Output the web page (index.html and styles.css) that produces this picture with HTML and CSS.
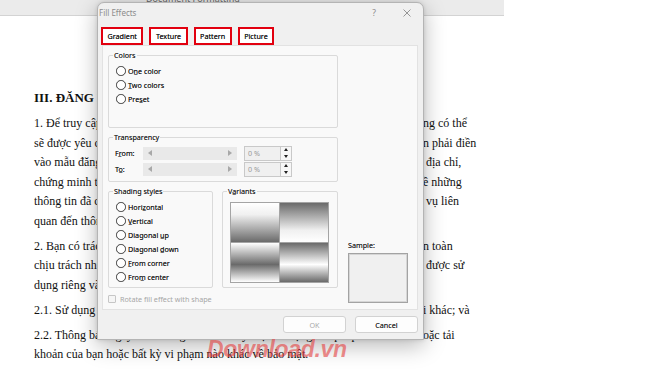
FILE: index.html
```html
<!DOCTYPE html>
<html lang="vi">
<head>
<meta charset="utf-8">
<title>Fill Effects</title>
<link rel="stylesheet" href="styles.css">
</head>
<body>
<div class="page">
  <div class="topbar"><span class="topbar-title">Document Formatting</span></div>
  <div class="doc">
    <h3 class="doc-heading">III. ĐĂNG KÝ</h3>
    <div class="para">
      <div class="line"><span class="l">1. Để truy cập</span><span class="r">ng có thể</span></div>
      <div class="line"><span class="l">sẽ được yêu cầu</span><span class="r">n phải điền</span></div>
      <div class="line"><span class="l">vào mẫu đăng ký</span><span class="r"> địa chỉ,</span></div>
      <div class="line"><span class="l">chứng minh thư</span><span class="r">ề những</span></div>
      <div class="line"><span class="l">thông tin đã cung</span><span class="r"> vụ liên</span></div>
      <div class="line"><span class="l">quan đến thông</span><span class="r"></span></div>
    </div>
    <div class="para">
      <div class="line"><span class="l">2. Bạn có trách</span><span class="r">n toàn</span></div>
      <div class="line"><span class="l">chịu trách nhiệm</span><span class="r"> được sử</span></div>
      <div class="line"><span class="l">dụng riêng và</span><span class="r"></span></div>
    </div>
    <div class="para">
      <div class="line"><span class="l">2.1. Sử dụng tài</span><span class="r">i khác; và</span></div>
    </div>
    <div class="para">
      <div class="line"><span class="l l-wide">2.2. Thông báo ngay cho chúng tôi về bất kỳ việc sử dụng trái phép</span><span class="r">oặc tải</span></div>
      <div class="line"><span class="l l-full">khoản của bạn hoặc bất kỳ vi phạm nào khác về bảo mật.</span></div>
    </div>
  </div>

  <div class="dialog">
    <div class="titlebar">
      <span class="title">Fill Effects</span>
      <span class="tb-help">?</span>
      <svg class="tb-close" width="8" height="8" viewBox="0 0 8 8"><path d="M0.5 0.5 L7.5 7.5 M7.5 0.5 L0.5 7.5" stroke="#8a8a8a" stroke-width="0.9" fill="none"/></svg>
    </div>
    <div class="tabs">
      <span class="tab">Gradient</span>
      <span class="tab">Texture</span>
      <span class="tab">Pattern</span>
      <span class="tab">Picture</span>
    </div>
    <div class="panel">
      <div class="panel-body">
        <div class="left-col">
          <div class="group colors">
            <span class="group-label">Colors</span>
            <div class="radio-row"><span class="radio"></span><span>On̲e color</span></div>
            <div class="radio-row"><span class="radio"></span><span>T̲wo colors</span></div>
            <div class="radio-row"><span class="radio"></span><span>Pres̲et</span></div>
          </div>
          <div class="group transparency">
            <span class="group-label">Transparency</span>
            <div class="trow">
              <span class="trow-label">Fr̲om:</span>
              <span class="slider"><span class="tri-left"></span><span class="tri-right"></span></span>
              <span class="num">0 %</span>
              <span class="spin"><span class="tri-up"></span><span class="tri-down"></span></span>
            </div>
            <div class="trow">
              <span class="trow-label">To̲:</span>
              <span class="slider"><span class="tri-left"></span><span class="tri-right"></span></span>
              <span class="num">0 %</span>
              <span class="spin"><span class="tri-up"></span><span class="tri-down"></span></span>
            </div>
          </div>
          <div class="group-row">
            <div class="group shading">
              <span class="group-label">Shading styles</span>
              <div class="radio-row"><span class="radio"></span><span>Horiz̲ontal</span></div>
              <div class="radio-row"><span class="radio"></span><span>V̲ertical</span></div>
              <div class="radio-row"><span class="radio"></span><span>Diagonal u̲p</span></div>
              <div class="radio-row"><span class="radio"></span><span>Diagonal d̲own</span></div>
              <div class="radio-row"><span class="radio"></span><span>F̲rom corner</span></div>
              <div class="radio-row"><span class="radio"></span><span>From̲ center</span></div>
            </div>
            <div class="group variants">
              <span class="group-label">Va̲riants</span>
              <div class="vgrid">
                <span class="cell cell-a"></span>
                <span class="cell cell-b"></span>
                <span class="cell cell-c"></span>
                <span class="cell cell-d"></span>
              </div>
            </div>
          </div>
          <div class="check-row"><span class="checkbox"></span><span>Rotate fill effect with shape</span></div>
        </div>
        <div class="right-col">
          <span class="sample-label">Sample:</span>
          <span class="sample-box"></span>
        </div>
      </div>
    </div>
    <div class="buttons">
      <span class="btn btn-disabled">OK</span>
      <span class="btn">Cancel</span>
    </div>
  </div>

  <div class="watermark">Download.vn</div>
</div>
</body>
</html>
```

FILE: styles.css
```css
html, body {
  margin: 0;
  padding: 0;
  background: #ffffff;
}

.page {
  position: relative;
  width: 650px;
  height: 374px;
  overflow: hidden;
  background: #ffffff;
}

/* ---------- document behind ---------- */
.topbar {
  width: 504px;
  height: 15px;
  background: #ebebeb;
  border-bottom: 1px solid #d3d3d3;
  overflow: hidden;
}

.topbar-title {
  display: block;
  margin-top: -6px;
  padding-left: 146px;
  font: 9px/9px "Noto Sans", sans-serif;
  color: #666;
}

.doc {
  padding: 72px 0 0 34px;
  font-family: "Liberation Serif", "Times New Roman", serif;
  font-size: 12px;
  color: #111;
}

.doc-heading {
  margin: 0 0 6.5px 0;
  font-size: 13px;
  font-weight: bold;
  line-height: 19.6px;
  white-space: nowrap;
}

.para + .para {
  margin-top: 5.2px;
}

.line {
  display: grid;
  grid-template-columns: 389px auto;
  height: 19.6px;
  line-height: 19.6px;
}

.line .l {
  white-space: nowrap;
}

.line .l-full {
  grid-column: 1 / 3;
}

.line .r {
  white-space: pre;
}

/* ---------- dialog ---------- */
.dialog {
  position: absolute;
  left: 97px;
  top: 2px;
  width: 327px;
  height: 338px;
  box-sizing: border-box;
  background: #f0f0f0;
  border: 1px solid #b4b4b4;
  border-radius: 7px 7px 0 0;
  box-shadow: 0 6px 22px rgba(0, 0, 0, 0.28), 0 0 4px rgba(0, 0, 0, 0.12);
  font-family: "Noto Sans", "Liberation Sans", sans-serif;
  font-size: 7.2px;
  color: #111;
  text-shadow: 0 0 0.4px rgba(0, 0, 0, 0.55);
}

.titlebar {
  display: flex;
  align-items: center;
  height: 19px;
  padding-left: 1px;
}

.title {
  font-size: 8px;
  color: #8c8c8c;
  text-shadow: none;
  flex: 1;
}

.tb-help {
  width: 10px;
  text-align: center;
  font-size: 8.5px;
  color: #8c8c8c;
  text-shadow: none;
}

.tb-close {
  margin-left: 24px;
  margin-right: 12px;
}

.tabs {
  display: flex;
  gap: 6px;
  margin-top: 5px;
  padding-left: 3px;
  height: 18px;
}

.tab {
  display: flex;
  align-items: center;
  justify-content: center;
  padding: 0 4.5px;
  box-sizing: border-box;
  height: 18px;
  background: #ffffff;
  border: 2px solid #e2000f;
  color: #111;
  text-shadow: 0 0 0.5px rgba(0, 0, 0, 0.7);
}

.panel {
  margin-left: 4px;
  width: 316px;
  height: 265px;
  box-sizing: border-box;
  background: #f9f9f9;
  border: 1px solid #e2e2e2;
  padding: 9px 0 0 5px;
}

.panel-body {
  display: flex;
}

.left-col {
  width: 230px;
}

.group {
  position: relative;
  box-sizing: border-box;
  border: 1px solid #dadada;
  border-radius: 2px;
}

.group-label {
  position: absolute;
  top: -6px;
  left: 4px;
  padding: 0 1px;
  background: #f9f9f9;
  line-height: 10px;
  color: #222;
}

.colors {
  height: 73px;
  padding: 8px 0 0 7px;
}

.radio-row {
  display: flex;
  align-items: center;
  gap: 2.5px;
  height: 14px;
}

.radio {
  width: 9.5px;
  height: 9.5px;
  box-sizing: border-box;
  border: 1px solid #3a3a3a;
  border-radius: 50%;
  background: #fff;
}

.transparency {
  margin-top: 9px;
  height: 45px;
  padding: 7px 0 0 6px;
}

.trow {
  display: flex;
  align-items: center;
  height: 16px;
}

.trow-label {
  width: 28px;
}

.slider {
  width: 94px;
  height: 13px;
  box-sizing: border-box;
  background: #e9e9e9;
  display: flex;
  align-items: center;
  justify-content: space-between;
  padding: 0 5px;
}

.tri-left {
  width: 0;
  height: 0;
  border-top: 3px solid transparent;
  border-bottom: 3px solid transparent;
  border-right: 4px solid #a8a8a8;
}

.tri-right {
  width: 0;
  height: 0;
  border-top: 3px solid transparent;
  border-bottom: 3px solid transparent;
  border-left: 4px solid #a8a8a8;
}

.num {
  margin-left: 7px;
  width: 37px;
  height: 15px;
  box-sizing: border-box;
  border: 1px solid #c9c9c9;
  background: #f0f0f0;
  color: #9a9a9a;
  text-shadow: none;
  padding-left: 3px;
  display: flex;
  align-items: center;
}

.spin {
  width: 11px;
  height: 15px;
  box-sizing: border-box;
  border: 1px solid #c9c9c9;
  border-left: none;
  background: #f7f7f7;
  display: flex;
  flex-direction: column;
  align-items: center;
  justify-content: space-around;
}

.tri-up {
  width: 0;
  height: 0;
  border-left: 2.5px solid transparent;
  border-right: 2.5px solid transparent;
  border-bottom: 3px solid #222;
}

.tri-down {
  width: 0;
  height: 0;
  border-left: 2.5px solid transparent;
  border-right: 2.5px solid transparent;
  border-top: 3px solid #222;
}

.group-row {
  display: flex;
  gap: 9px;
  margin-top: 9px;
}

.shading {
  width: 105px;
  height: 97px;
  padding: 8px 0 0 7px;
}

.variants {
  width: 116px;
  height: 97px;
  padding: 10px 0 0 7px;
}

.vgrid {
  display: grid;
  grid-template-columns: 48px 48px;
  grid-template-rows: 39px 39px;
  gap: 1px;
  padding: 1px;
  width: max-content;
  background: #a4a4a4;
}

.cell-a {
  background: linear-gradient(to bottom, #ffffff 0%, #f0f0f0 30%, #6a6a6a 100%);
}

.cell-b {
  background: linear-gradient(to bottom, #6a6a6a 0%, #f0f0f0 70%, #ffffff 100%);
}

.cell-c {
  background: linear-gradient(to bottom, #ffffff 0%, #6a6a6a 55%, #ffffff 100%);
}

.cell-d {
  background: linear-gradient(to bottom, #6a6a6a 0%, #ffffff 55%, #6a6a6a 100%);
}

.check-row {
  display: flex;
  align-items: center;
  gap: 4px;
  margin-top: 7px;
  height: 8px;
  color: #a6a6a6;
  text-shadow: none;
}

.checkbox {
  width: 8px;
  height: 8px;
  box-sizing: border-box;
  border: 1px solid #c6c6c6;
  border-radius: 1px;
  background: #f5f5f5;
}

.right-col {
  margin-left: 10px;
  display: flex;
  flex-direction: column;
  justify-content: flex-end;
}

.sample-label {
  line-height: 10px;
  margin-bottom: 3px;
  color: #222;
}

.sample-box {
  width: 60px;
  height: 50px;
  box-sizing: border-box;
  border: 1px solid #a3a3a3;
  box-shadow: inset 0 0 0 1px #d6d6d6;
  background: #f0f0f0;
}

.buttons {
  display: flex;
  justify-content: flex-end;
  gap: 9px;
  margin-top: 6px;
  padding-right: 5px;
}

.btn {
  width: 63px;
  height: 17px;
  box-sizing: border-box;
  border: 1px solid #d2d2d2;
  border-radius: 3px;
  background: #fdfdfd;
  display: flex;
  align-items: center;
  justify-content: center;
  color: #222;
}

.btn-disabled {
  color: #a8a8a8;
  text-shadow: none;
}

/* ---------- watermark ---------- */
.watermark {
  position: absolute;
  left: 207px;
  top: 336px;
  font-family: "Liberation Sans", sans-serif;
  font-style: italic;
  font-weight: bold;
  font-size: 23px;
  line-height: 26px;
  color: rgba(228, 64, 64, 0.6);
  letter-spacing: -0.3px;
}
```
